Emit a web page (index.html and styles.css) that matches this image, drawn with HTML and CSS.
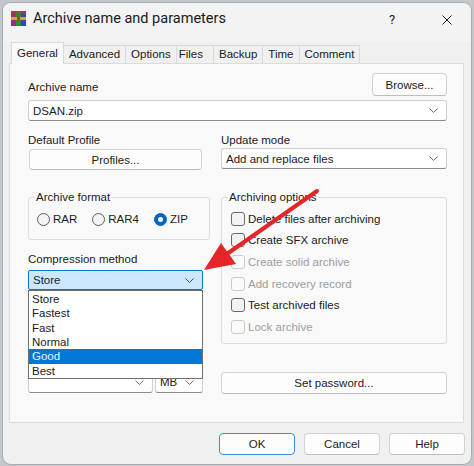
FILE: index.html
```html
<!DOCTYPE html>
<html lang="en">

<head>
    <meta charset="UTF-8">
    <title>Archive name and parameters</title>
    <link rel="stylesheet" href="styles.css">
</head>

<body>
    <div class="window">
        <div class="titlebar">
            <svg class="app-icon" width="17" height="17" viewBox="0 0 17 17">
                <rect x="1" y="1" width="5" height="15" fill="#9c2f72" />
                <rect x="6" y="1" width="5" height="15" fill="#2f8a3c" />
                <rect x="11" y="1" width="5" height="15" fill="#2d4ea6" />
                <rect x="1" y="1" width="15" height="3" fill="#c0392b" opacity=".6" />
                <rect x="1" y="7" width="15" height="3" fill="#d2a43a" />
                <rect x="7" y="6" width="3" height="5" fill="#7d5a22" />
            </svg>
            <span class="title">Archive name and parameters</span>
            <span class="help">?</span>
            <svg class="close" width="10" height="10" viewBox="0 0 10 10">
                <path d="M0.5 0.5 L9.5 9.5 M9.5 0.5 L0.5 9.5" stroke="#1b1b1b" stroke-width="1" />
            </svg>
        </div>

        <div class="tabs">
            <div class="tab active">General</div>
            <div class="tab">Advanced</div>
            <div class="tab">Options</div>
            <div class="tab tab-files">Files</div>
            <div class="tab">Backup</div>
            <div class="tab">Time</div>
            <div class="tab">Comment</div>
        </div>

        <div class="panel">
            <div class="name-row">
                <span class="label">Archive name</span>
                <button class="btn browse">Browse...</button>
            </div>
            <div class="combo name-combo">
                <span>DSAN.zip</span>
                <svg class="chev" width="9" height="5" viewBox="0 0 9 5"><path d="M0.5 0.5 L4.5 4.5 L8.5 0.5" fill="none" stroke="#707070" /></svg>
            </div>

            <div class="cols">
                <div class="col col-left">
                    <span class="label top-label">Default Profile</span>
                    <button class="btn profiles">Profiles...</button>

                    <fieldset class="group format">
                        <legend>Archive format</legend>
                        <div class="radios">
                            <label class="radio"><span class="dot"></span>RAR</label>
                            <label class="radio"><span class="dot"></span>RAR4</label>
                            <label class="radio on"><span class="dot"></span>ZIP</label>
                        </div>
                    </fieldset>

                    <span class="label method-label">Compression method</span>
                    <div class="combo method-combo">
                        <span>Store</span>
                        <svg class="chev" width="9" height="5" viewBox="0 0 9 5"><path d="M0.5 0.5 L4.5 4.5 L8.5 0.5" fill="none" stroke="#505050" /></svg>
                    </div>

                    <div class="dict-row">
                        <div class="combo dict-combo">
                            <span></span>
                            <svg class="chev" width="9" height="5" viewBox="0 0 9 5"><path d="M0.5 0.5 L4.5 4.5 L8.5 0.5" fill="none" stroke="#707070" /></svg>
                        </div>
                        <div class="combo unit-combo">
                            <span>MB</span>
                            <svg class="chev" width="9" height="5" viewBox="0 0 9 5"><path d="M0.5 0.5 L4.5 4.5 L8.5 0.5" fill="none" stroke="#707070" /></svg>
                        </div>
                    </div>

                    <!-- opened list of the compression combo -->
                    <ul class="droplist">
                        <li>Store</li>
                        <li>Fastest</li>
                        <li>Fast</li>
                        <li>Normal</li>
                        <li class="selected">Good</li>
                        <li>Best</li>
                    </ul>
                </div>

                <div class="col col-right">
                    <span class="label top-label">Update mode</span>
                    <div class="combo update-combo">
                        <span>Add and replace files</span>
                        <svg class="chev" width="9" height="5" viewBox="0 0 9 5"><path d="M0.5 0.5 L4.5 4.5 L8.5 0.5" fill="none" stroke="#707070" /></svg>
                    </div>

                    <fieldset class="group options">
                        <legend>Archiving options</legend>
                        <label class="check"><span class="box"></span>Delete files after archiving</label>
                        <label class="check"><span class="box"></span>Create SFX archive</label>
                        <label class="check disabled"><span class="box"></span>Create solid archive</label>
                        <label class="check disabled"><span class="box"></span>Add recovery record</label>
                        <label class="check"><span class="box"></span>Test archived files</label>
                        <label class="check disabled"><span class="box"></span>Lock archive</label>
                    </fieldset>

                    <button class="btn password">Set password...</button>
                </div>
            </div>
        </div>

        <div class="footer">
            <button class="btn ok">OK</button>
            <button class="btn">Cancel</button>
            <button class="btn">Help</button>
        </div>
    </div>

    <!-- red annotation arrow -->
    <svg class="arrow" width="474" height="466" viewBox="0 0 474 466">
        <line x1="317" y1="191" x2="224" y2="256" stroke="#e4262b" stroke-width="4" stroke-linecap="round" />
        <polygon points="204,270 221,243 236,264" fill="#e4262b" />
    </svg>
</body>

</html>
```

FILE: styles.css
```css
* {
    margin: 0;
    padding: 0;
    box-sizing: border-box;
}

li {
    list-style: none;
}

body {
    padding: 3px;
    background-color: #c3c6ca;
    font-family: "Liberation Sans", Arial, sans-serif;
    font-size: 11.5px;
    color: #1b1b1b;
}

.window {
    width: 468px;
    height: 461px;
    background-color: #f0f0f0;
    border-radius: 8px;
    box-shadow: 0 0 0 1px #a8abaf;
    display: flex;
    flex-direction: column;
}

/* title bar */
.titlebar {
    height: 39px;
    display: flex;
    align-items: flex-start;
    padding: 7px 0 0 7px;
    background-color: #f3f3f3;
    border-radius: 8px 8px 0 0;
}

.app-icon {
    flex: none;
}

.title {
    margin-left: 6px;
    font-family: Roboto, sans-serif;
    font-size: 14.5px;
    line-height: 18px;
    color: #1a1a1a;
}

.help {
    margin-left: auto;
    width: 20px;
    margin-right: 40px;
    margin-top: 1px;
    text-align: center;
    font-family: Roboto, sans-serif;
    font-size: 13px;
    line-height: 18px;
}

.close {
    margin-top: 5px;
    margin-right: 19px;
}

/* tabs */
.tabs {
    height: 21px;
    display: flex;
    align-items: flex-end;
    padding-left: 8px;
    background-color: #f0f0f0;
}

.tab {
    height: 18px;
    line-height: 17px;
    padding: 0 5px;
    border: 1px solid #d9d9d9;
    border-bottom: none;
    margin-right: -1px;
    background-color: #f0f0f0;
}

.tab-files {
    padding: 0 10px 0 2px;
}

.tab.active {
    height: 22px;
    line-height: 20px;
    padding: 0 5px;
    margin-bottom: -1px;
    background-color: #f9f9f9;
    position: relative;
    z-index: 1;
}

/* tab page */
.panel {
    height: 360px;
    margin: 0 7px 0 6px;
    padding: 9px 16px 0 18px;
    background-color: #f9f9f9;
    border: 1px solid #dcdcdc;
}

.label {
    display: block;
    line-height: 14px;
}

.name-row {
    display: flex;
    justify-content: space-between;
    align-items: flex-end;
}

.name-row .label {
    margin-bottom: 2px;
}

.btn {
    font-family: inherit;
    font-size: inherit;
    color: #1b1b1b;
    background-color: #fdfdfd;
    border: 1px solid #d3d3d3;
    border-bottom-color: #bdbdbd;
    border-radius: 4px;
}

.browse {
    width: 75px;
    height: 23px;
}

.combo {
    height: 21px;
    display: flex;
    align-items: center;
    justify-content: space-between;
    padding: 0 8px 0 4px;
    background-color: #fff;
    border: 1px solid #d0d0d0;
    border-bottom-color: #8a8a8a;
    border-radius: 3px;
}

.name-combo {
    margin-top: 4px;
}

.cols {
    display: grid;
    grid-template-columns: 175px 226px;
    column-gap: 18px;
}

.col {
    display: flex;
    flex-direction: column;
}

.col-left {
    position: relative;
}

.top-label {
    margin-top: 12px;
}

.profiles {
    height: 21px;
    margin: 2px 1px 0;
}

.update-combo {
    margin-top: 1px;
}

/* group boxes */
.group {
    border: 1px solid #dcdcdc;
    border-radius: 3px;
    padding: 0 6px;
}

.group legend {
    padding: 0 1px;
    line-height: 14px;
}

.format {
    margin-top: 20px;
    padding-bottom: 13px;
}

.radios {
    display: flex;
    margin-top: 8px;
    margin-left: 2px;
    height: 14px;
    align-items: center;
}

.radio {
    display: flex;
    align-items: center;
    margin-right: 15px;
}

.radio .dot {
    width: 13px;
    height: 13px;
    margin-right: 3px;
    border: 1px solid #5e5e5e;
    border-radius: 50%;
    background-color: #f3f3f3;
    display: flex;
    justify-content: center;
    align-items: center;
}

.radio.on .dot {
    background-color: #0067c0;
    border-color: #0067c0;
}

.radio.on .dot::after {
    content: "";
    width: 5px;
    height: 5px;
    border-radius: 50%;
    background-color: #fff;
}

.method-label {
    margin-top: 12px;
}

.method-combo {
    height: 20px;
    margin-top: 4px;
    background-color: #cce8ff;
    border-color: #0078d7;
    border-radius: 2px;
}

.dict-row {
    display: flex;
    gap: 2px;
    margin-top: 81px;
}

.dict-combo {
    width: 125px;
    height: 22px;
}

.unit-combo {
    width: 48px;
    height: 22px;
}

.droplist {
    position: absolute;
    top: 169px;
    left: 0;
    width: 175px;
    padding-top: 1px;
    background-color: #fff;
    border: 1px solid #6e6e6e;
    z-index: 2;
}

.droplist li {
    height: 14.33px;
    line-height: 14px;
    padding-left: 3px;
}

.droplist .selected {
    background-color: #0078d7;
    color: #eaf4ff;
}

.options {
    margin-top: 21px;
    padding-top: 4px;
    padding-bottom: 5px;
}

.check {
    display: flex;
    align-items: center;
    height: 21.6px;
    margin-left: 3px;
}

.check .box {
    width: 14px;
    height: 14px;
    margin-right: 3px;
    border: 1px solid #6a6a6a;
    border-radius: 3px;
    background-color: #f3f3f3;
}

.check.disabled {
    color: #9d9d9d;
}

.check.disabled .box {
    border-color: #cbcbcb;
    background-color: #fbfbfb;
}

.password {
    height: 22px;
    margin-top: 28px;
}

/* dialog buttons */
.footer {
    display: flex;
    justify-content: flex-end;
    gap: 9px;
    padding: 10px 6px 0 0;
}

.footer .btn {
    width: 76px;
    height: 22px;
}

.footer .ok {
    border-color: #3d8bd6;
}

.arrow {
    position: absolute;
    top: 0;
    left: 0;
    pointer-events: none;
}
```
